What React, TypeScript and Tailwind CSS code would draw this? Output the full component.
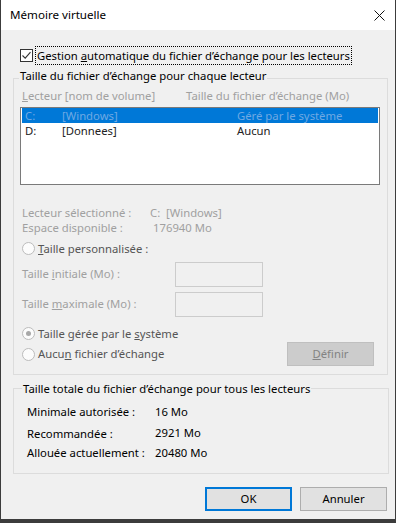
import React from "react";

const font = "font-['Noto_Sans',sans-serif]";

function CheckBox() {
  return (
    <span className="flex h-[13px] w-[13px] shrink-0 items-center justify-center border border-[#333333] bg-white">
      <svg width="11" height="11" viewBox="0 0 11 11" aria-hidden="true">
        <path d="M1.5 5.5 L4.2 8.2 L9.5 2.2" fill="none" stroke="#333333" strokeWidth="1.1" />
      </svg>
    </span>
  );
}

function Radio({ checked = false }: { checked?: boolean }) {
  return (
    <span className="flex h-[13px] w-[13px] shrink-0 items-center justify-center rounded-full border border-[#bcbcbc] bg-[#fcfcfc]">
      {checked && <span className="h-[5px] w-[5px] rounded-full bg-[#a8a8a8]" />}
    </span>
  );
}

export default function App() {
  return (
    <div
      className={`${font} flex h-[523px] w-[396px] flex-col border-x border-b-[4px] border-[#3c3c3c] bg-[#f0f0f0] text-[11.3px] text-black`}
    >
      {/* ── TITLE BAR ─────────────────────────── */}
      <div className="flex h-[30px] shrink-0 items-center justify-between bg-white pl-[9px] pr-[10px]">
        <span className="text-[11.6px] leading-[16px]">Mémoire virtuelle</span>
        <svg width="11" height="11" viewBox="0 0 11 11" aria-hidden="true">
          <path d="M0.5 0.5 L10.5 10.5 M10.5 0.5 L0.5 10.5" stroke="#111111" strokeWidth="1" />
        </svg>
      </div>

      {/* Automatic management */}
      <div className="ml-[19px] mt-[16px] flex items-center">
        <CheckBox />
        <span className="ml-[2px] h-[19px] border border-dotted border-black px-[1px] leading-[17px]">
          Gestion <u>a</u>utomatique du fichier d’échange pour les lecteurs
        </span>
      </div>

      {/* ── PER-DRIVE GROUP ───────────────────── */}
      <fieldset className="ml-[12px] mr-[7px] mt-[3px] border border-[#dcdcdc] pb-[8px]">
        <legend className="ml-[5px] px-[1px] pb-[6px] leading-[15px]">
          Taille du fichier d’échange pour chaque lecteur
        </legend>

        {/* Column headers */}
        <div className="flex h-[14px] items-center pl-[8px] leading-[14px] text-[#a0a0a0]">
          <span className="w-[164px]">
            <u>L</u>ecteur [nom de volume]
          </span>
          <span>Taille du fichier d’échange (Mo)</span>
        </div>

        {/* Drive list */}
        <div className="ml-[6px] mt-[4px] h-[78px] w-[360px] border border-[#7a7a7a] bg-white px-[1px]">
          <div className="flex h-[15px] items-center bg-[#0078d7] leading-[15px] text-[#6fa9e3]">
            <span className="w-[40px] pl-[3px]">C:</span>
            <span className="w-[175px]">[Windows]</span>
            <span>Géré par le système</span>
          </div>
          <div className="flex h-[15px] items-center leading-[15px] text-[#222222]">
            <span className="w-[40px] pl-[3px]">D:</span>
            <span className="w-[175px]">[Donnees]</span>
            <span>Aucun</span>
          </div>
        </div>

        {/* Selected drive info */}
        <div className="mt-[20px] flex h-[15px] items-center pl-[8px] leading-[15px] text-[#a0a0a0]">
          <span className="w-[128px]">Lecteur sélectionné :</span>
          <span>C:&nbsp;&nbsp;[Windows]</span>
        </div>
        <div className="flex h-[15px] items-center pl-[8px] leading-[15px] text-[#a0a0a0]">
          <span className="w-[131px]">Espace disponible :</span>
          <span>176940 Mo</span>
        </div>

        {/* Custom size */}
        <div className="mt-[6px] flex h-[15px] items-center pl-[8px] leading-[15px] text-[#555555]">
          <Radio />
          <span className="ml-[3px]">
            <u>T</u>aille personnalisée :
          </span>
        </div>

        <div className="mt-[6px] flex h-[25px] items-center pl-[8px] text-[#a0a0a0]">
          <span className="w-[153px]">
            Taille <u>i</u>nitiale (Mo) :
          </span>
          <span className="h-[25px] w-[88px] border border-[#cccccc] bg-[#f0f0f0]" />
        </div>
        <div className="mt-[5px] flex h-[25px] items-center pl-[8px] text-[#a0a0a0]">
          <span className="w-[153px]">
            Taille <u>m</u>aximale (Mo) :
          </span>
          <span className="h-[25px] w-[88px] border border-[#cccccc] bg-[#f0f0f0]" />
        </div>

        <div className="mt-[9px] flex h-[15px] items-center pl-[8px] leading-[15px] text-[#555555]">
          <Radio checked />
          <span className="ml-[3px]">
            Taille gérée par le <u>s</u>ystème
          </span>
        </div>

        <div className="mt-[1px] flex h-[24px] items-center pl-[8px] text-[#555555]">
          <Radio />
          <span className="ml-[3px]">
            Aucu<u>n</u> fichier d’échange
          </span>
          <button
            type="button"
            disabled
            className="ml-auto mr-[13px] h-[24px] w-[87px] border border-[#bfbfbf] bg-[#cccccc] text-[#838383]"
          >
            <u>D</u>éfinir
          </button>
        </div>
      </fieldset>

      {/* ── TOTAL GROUP ───────────────────────── */}
      <fieldset className="ml-[12px] mr-[6px] mt-[6px] border border-[#dcdcdc] pb-[13px]">
        <legend className="ml-[8px] px-[1px] leading-[15px]">
          Taille totale du fichier d’échange pour tous les lecteurs
        </legend>

        <div className="mt-[8px] flex h-[15px] items-center pl-[13px] leading-[15px]">
          <span className="w-[128px]">Minimale autorisée :</span>
          <span>16 Mo</span>
        </div>
        <div className="mt-[6px] flex h-[15px] items-center pl-[13px] leading-[15px]">
          <span className="w-[128px] pt-[2px]">Recommandée :</span>
          <span>2921 Mo</span>
        </div>
        <div className="mt-[5px] flex h-[15px] items-center pl-[13px] leading-[15px]">
          <span className="w-[128px]">Allouée actuellement :</span>
          <span>20480 Mo</span>
        </div>
      </fieldset>

      {/* ── ACTIONS ───────────────────────────── */}
      <div className="mt-[13px] flex justify-end gap-[8px] pr-[8px]">
        <button
          type="button"
          className="h-[24px] w-[87px] border-2 border-[#0078d7] bg-[#e1e1e1] text-[11.3px] text-black"
        >
          OK
        </button>
        <button
          type="button"
          className="h-[24px] w-[87px] border border-[#adadad] bg-[#e1e1e1] text-[11.3px] text-black"
        >
          Annuler
        </button>
      </div>
    </div>
  );
}
